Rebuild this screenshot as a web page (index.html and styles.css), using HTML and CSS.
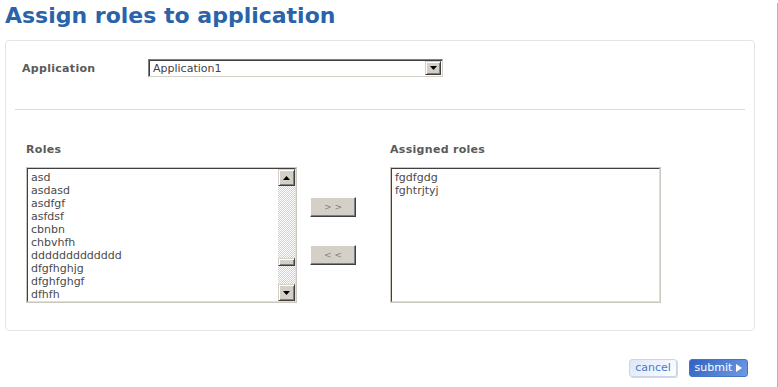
FILE: index.html
```html
<!DOCTYPE html>
<html>
<head>
<meta charset="utf-8">
<link rel="stylesheet" href="styles.css">
</head>
<body>
<div class="page">
  <h1 class="title">Assign roles to application</h1>
  <div class="panel">
    <div class="app-row">
      <div class="field-label">Application</div>
      <div class="combo">
        <span class="combo-value">Application1</span>
        <span class="combo-btn"><svg width="7" height="4" viewBox="0 0 7 4"><path d="M0 0h7L3.5 4z" fill="#000"/></svg></span>
      </div>
    </div>
    <hr class="sep">
    <div class="lists">
      <div class="col">
        <div class="col-label">Roles</div>
        <div class="listbox">
          <div class="listbox-inner">
            <ul class="items">
              <li>asd</li>
              <li>asdasd</li>
              <li>asdfgf</li>
              <li>asfdsf</li>
              <li>cbnbn</li>
              <li>chbvhfh</li>
              <li>ddddddddddddd</li>
              <li>dfgfhghjg</li>
              <li>dfghfghgf</li>
              <li>dfhfh</li>
            </ul>
            <div class="vscroll">
              <div class="sb-btn"><svg width="7" height="4" viewBox="0 0 7 4"><path d="M3.5 0L7 4H0z" fill="#000"/></svg></div>
              <div class="sb-track"><div class="sb-thumb"></div></div>
              <div class="sb-btn"><svg width="7" height="4" viewBox="0 0 7 4"><path d="M0 0h7L3.5 4z" fill="#000"/></svg></div>
            </div>
          </div>
        </div>
      </div>
      <div class="movers">
        <button class="move-btn">&gt; &gt;</button>
        <button class="move-btn">&lt; &lt;</button>
      </div>
      <div class="col">
        <div class="col-label">Assigned roles</div>
        <div class="listbox">
          <div class="listbox-inner">
            <ul class="items">
              <li>fgdfgdg</li>
              <li>fghtrjtyj</li>
            </ul>
          </div>
        </div>
      </div>
    </div>
  </div>
  <div class="actions">
    <button class="btn-cancel">cancel</button>
    <button class="btn-submit">submit <svg width="6" height="8" viewBox="0 0 6 8"><path d="M0 0l6 4-6 4z" fill="#fff"/></svg></button>
  </div>
</div>
</body>
</html>
```
FILE: styles.css
```css
* { box-sizing: border-box; }
html, body { margin: 0; padding: 0; background: #fff; }
body { font-family: "DejaVu Sans", Verdana, sans-serif; }

.page {
  width: 778px;
  min-height: 387px;
  border-right: 1px solid #aab4be;
  padding-left: 5px;
}

.title {
  margin: 3px 0 0;
  font-size: 22px;
  line-height: 26px;
  font-weight: bold;
  color: #2a63a9;
}

.panel {
  margin-top: 11px;
  width: 750px;
  border: 1px solid #e4e4e4;
  border-radius: 4px;
  padding: 18px 9px 27px;
}

.app-row {
  display: flex;
  align-items: center;
  height: 18px;
  padding-left: 7px;
}

.field-label, .col-label {
  font-size: 11px;
  font-weight: bold;
  color: #5a5a5a;
  line-height: 13px;
  letter-spacing: 0.3px;
}
.field-label { width: 126px; }

.combo {
  width: 295px;
  height: 18px;
  display: flex;
  align-items: center;
  border: 1px solid;
  border-color: #808080 #d4d0c8 #d4d0c8 #808080;
  box-shadow: inset 1px 1px #404040;
  padding: 1px 1px 1px 4px;
  background: #fff;
}
.combo-value {
  flex: 1;
  font-size: 11px;
  color: #444;
}
.combo-btn {
  width: 16px;
  height: 14px;
  display: flex;
  align-items: center;
  justify-content: center;
  background: #d4d0c8;
  border: 1px solid;
  border-color: #d4d0c8 #404040 #404040 #d4d0c8;
  box-shadow: inset 1px 1px #fff, inset -1px -1px #808080;
}

.sep {
  margin: 32px 0 0;
  height: 0;
  border: 0;
  border-top: 1px solid #dcdcdc;
}

.lists {
  display: flex;
  align-items: flex-start;
  margin-top: 33px;
  padding-left: 11px;
}
.col-label { margin-bottom: 11px; }

.listbox {
  width: 271px;
  height: 136px;
  border: 1px solid #cbc7bf;
}
.listbox-inner {
  height: 100%;
  display: flex;
  border: 1px solid;
  border-color: #404040 #e2dfd8 #e2dfd8 #404040;
  background: #fff;
}
.items {
  flex: 1;
  margin: 0;
  padding: 2px 3px 0;
  list-style: none;
  font-size: 11px;
  line-height: 13px;
  color: #4a4a4a;
  overflow: hidden;
}

.vscroll {
  width: 17px;
  display: flex;
  flex-direction: column;
}
.sb-btn, .sb-thumb {
  background: #d4d0c8;
  border: 1px solid;
  border-color: #d4d0c8 #404040 #404040 #d4d0c8;
  box-shadow: inset 1px 1px #fff, inset -1px -1px #808080;
}
.sb-btn {
  height: 17px;
  display: flex;
  align-items: center;
  justify-content: center;
}
.sb-track {
  flex: 1;
  background: repeating-conic-gradient(#d4d0c8 0 25%, #fff 0 50%) 0 0 / 2px 2px;
}
.sb-thumb {
  margin-top: 72px;
  height: 8px;
}

.movers {
  display: flex;
  flex-direction: column;
  gap: 28px;
  padding-top: 54px;
  margin: 0 34px 0 13px;
}
.move-btn {
  width: 46px;
  height: 20px;
  padding: 0;
  background: #d4d0c8;
  border: 1px solid;
  border-color: #fff #404040 #404040 #fff;
  box-shadow: inset -1px -1px #808080;
  font-family: "DejaVu Sans", sans-serif;
  font-size: 9px;
  color: #808080;
}

.actions {
  display: flex;
  justify-content: flex-end;
  gap: 12px;
  width: 750px;
  padding-right: 7px;
  margin-top: 28px;
}
.btn-cancel, .btn-submit {
  height: 18px;
  padding: 0;
  border-radius: 3px;
  font-family: "DejaVu Sans", sans-serif;
  font-size: 11px;
  line-height: 16px;
}
.btn-cancel {
  width: 48px;
  border: 1px solid #c9d5e6;
  background: linear-gradient(135deg, #dbe7f8, #fff);
  color: #4a7bc4;
  box-shadow: 1px 1px 0 #d8d8d8;
}
.btn-submit {
  width: 59px;
  border: 1px solid #4673c6;
  background: linear-gradient(135deg, #2f63c2, #6f9be3);
  color: #fff;
  display: flex;
  align-items: center;
  justify-content: center;
  gap: 4px;
}
```
